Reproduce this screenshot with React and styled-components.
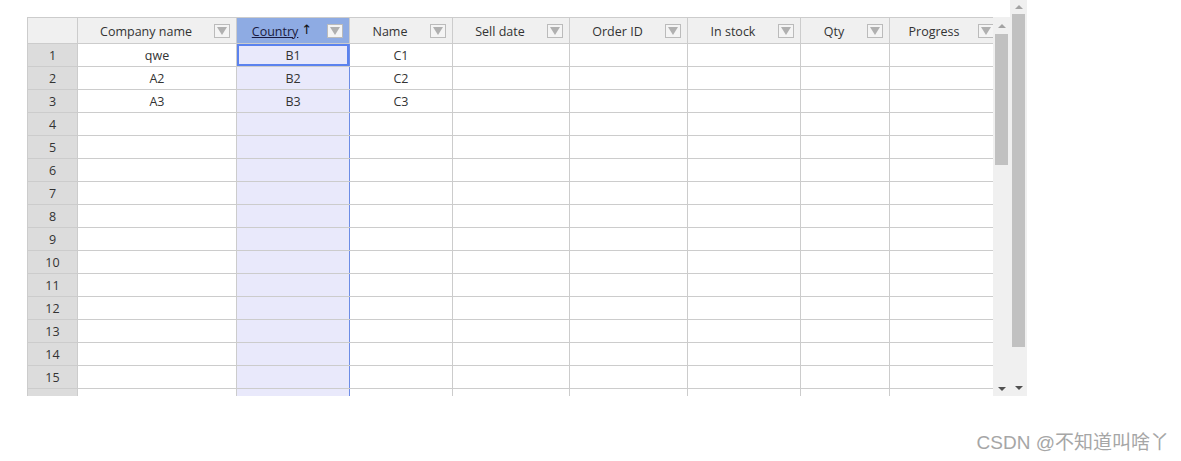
import React from "react"
import styled, { createGlobalStyle } from "styled-components"

const GlobalStyle = createGlobalStyle`
  html, body {
    margin: 0;
    padding: 0;
    background: #ffffff;
    overflow: hidden;
  }
`

const Page = styled.div`
  width: 1181px;
  height: 461px;
  display: flex;
  flex-direction: column;
  font-family: "Open Sans", "Noto Sans", sans-serif;
`

const Frame = styled.div`
  width: 1027px;
  height: 396px;
  display: flex;
`

const FrameBody = styled.div`
  flex: 1;
  padding: 17px 0 0 27px;
  display: flex;
  min-width: 0;
`

const GridView = styled.div`
  flex: 1;
  display: flex;
  min-width: 0;
`

const Viewport = styled.div`
  flex: 1;
  overflow: hidden;
  min-width: 0;
`

const Table = styled.table`
  border-collapse: collapse;
  table-layout: fixed;
  width: 973px;
  font-size: 12.5px;
  color: #333;
`

const HeadCell = styled.th`
  height: 25px;
  padding: 0;
  font-weight: 400;
  border: 1px solid #cccccc;
  background: ${(p) => (p.$sorted ? "#8eabe3" : "#f0f0f0")};
  color: #333;
  white-space: nowrap;
  overflow: hidden;
`

const HeadInner = styled.div`
  display: flex;
  align-items: center;
  padding: 1px 6px 0 0;
`

const HeadLabel = styled.div`
  flex: 1;
  display: flex;
  justify-content: center;
  align-items: center;
  gap: 3px;
  min-width: 0;
`

const LabelText = styled.span`
  text-decoration: ${(p) => (p.$sorted ? "underline" : "none")};
  color: ${(p) => (p.$sorted ? "#1a1a40" : "#333")};
`

const SortArrow = styled.span`
  font-size: 13px;
  font-family: "DejaVu Sans", sans-serif;
  color: #111;
  margin-top: -4px;
`

const FilterButton = styled.span`
  flex: none;
  width: 14px;
  height: 12px;
  margin-top: -1px;
  border: 1px solid #bbbbbb;
  background: #f4f4f4;
  display: flex;
  align-items: center;
  justify-content: center;
  &::after {
    content: "";
    border-left: 5px solid transparent;
    border-right: 5px solid transparent;
    border-top: 8px solid #b0b0b0;
  }
`

const Cell = styled.td`
  height: 22px;
  padding: 0;
  border: 1px solid #cccccc;
  text-align: center;
  background: ${(p) => (p.$sorted ? "#e9e9fb" : "#ffffff")};
  ${(p) => p.$sorted && "border-left-color: #6d8de6; border-right-color: #6d8de6;"}
  ${(p) => p.$active && "box-shadow: inset 0 0 0 2px #5b82ee;"}
  color: #333;
`

const RowHead = styled.td`
  height: 22px;
  padding: 0;
  border: 1px solid #cccccc;
  background: #dcdcdc;
  text-align: center;
  color: #333;
`

const Scrollbar = styled.div`
  width: 17px;
  flex: none;
  background: #f0f0f0;
  display: flex;
  flex-direction: column;
  align-items: center;
  padding: ${(p) => p.$pad};
  box-sizing: border-box;
`

const Thumb = styled.div`
  width: 13px;
  height: ${(p) => p.$height}px;
  margin-top: ${(p) => p.$gap}px;
  background: #c1c1c1;
`

const ArrowUp = styled.div`
  flex: none;
  border-left: 4px solid transparent;
  border-right: 4px solid transparent;
  border-bottom: 4px solid #a3a3a3;
`

const ArrowDown = styled.div`
  flex: none;
  margin-top: auto;
  border-left: 4px solid transparent;
  border-right: 4px solid transparent;
  border-top: 4px solid #505050;
`

const Watermark = styled.div`
  margin-top: 31px;
  padding-right: 12px;
  text-align: right;
  font-family: "Liberation Sans", "Noto Sans CJK SC", sans-serif;
  font-size: 19px;
  color: #a6a6a6;
`

const columns = [
  { name: "Company name", width: 159 },
  { name: "Country", width: 113, sorted: true },
  { name: "Name", width: 103 },
  { name: "Sell date", width: 117 },
  { name: "Order ID", width: 118 },
  { name: "In stock", width: 113 },
  { name: "Qty", width: 89 },
  { name: "Progress", width: 111 },
]

const data = [
  ["qwe", "B1", "C1"],
  ["A2", "B2", "C2"],
  ["A3", "B3", "C3"],
]

const rows = Array.from({ length: 16 }, (_, i) => data[i] || [])

const App = () => {
  return (
    <Page>
      <GlobalStyle />
      <Frame>
        <FrameBody>
          <GridView>
            <Viewport>
              <Table>
                <colgroup>
                  <col style={{ width: 50 }} />
                  {columns.map((c) => (
                    <col key={c.name} style={{ width: c.width }} />
                  ))}
                </colgroup>
                <thead>
                  <tr>
                    <HeadCell />
                    {columns.map((c) => (
                      <HeadCell key={c.name} $sorted={c.sorted}>
                        <HeadInner>
                          <HeadLabel>
                            <LabelText $sorted={c.sorted}>{c.name}</LabelText>
                            {c.sorted && <SortArrow>↑</SortArrow>}
                          </HeadLabel>
                          <FilterButton />
                        </HeadInner>
                      </HeadCell>
                    ))}
                  </tr>
                </thead>
                <tbody>
                  {rows.map((r, i) => (
                    <tr key={i}>
                      <RowHead>{i + 1}</RowHead>
                      {columns.map((c, j) => (
                        <Cell
                          key={c.name}
                          $sorted={c.sorted}
                          $active={i === 0 && j === 1}
                        >
                          {r[j] || ""}
                        </Cell>
                      ))}
                    </tr>
                  ))}
                </tbody>
              </Table>
            </Viewport>
            <Scrollbar $pad="7px 0 5px">
              <ArrowUp />
              <Thumb $gap={6} $height={131} />
              <ArrowDown />
            </Scrollbar>
          </GridView>
        </FrameBody>
        <Scrollbar $pad="5px 0 6px">
          <ArrowUp />
          <Thumb $gap={5} $height={333} />
          <ArrowDown />
        </Scrollbar>
      </Frame>
      <Watermark>CSDN @不知道叫啥丫</Watermark>
    </Page>
  )
}

export default App
